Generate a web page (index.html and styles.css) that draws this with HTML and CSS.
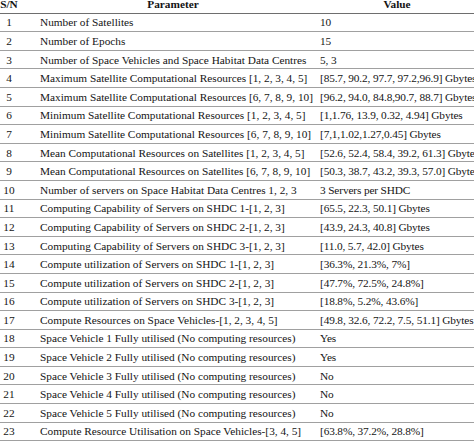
FILE: index.html
```html
<!DOCTYPE html>
<html>
<head>
<meta charset="utf-8">
<link rel="stylesheet" href="styles.css">
</head>
<body>
<table class="params">
  <colgroup>
    <col class="c-sn"><col class="c-param"><col class="c-val">
  </colgroup>
  <thead>
    <tr><th class="sn">S/N</th><th>Parameter</th><th>Value</th></tr>
  </thead>
  <tbody>
    <tr><td class="sn">1</td><td>Number of Satellites</td><td class="val">10</td></tr>
    <tr><td class="sn">2</td><td>Number of Epochs</td><td class="val">15</td></tr>
    <tr><td class="sn">3</td><td>Number of Space Vehicles and Space Habitat Data Centres</td><td class="val">5, 3</td></tr>
    <tr><td class="sn">4</td><td>Maximum Satellite Computational Resources [1, 2, 3, 4, 5]</td><td class="val">[85.7, 90.2, 97.7, 97.2,96.9] Gbytes</td></tr>
    <tr><td class="sn">5</td><td>Maximum Satellite Computational Resources [6, 7, 8, 9, 10]</td><td class="val">[96.2, 94.0, 84.8,90.7, 88.7] Gbytes</td></tr>
    <tr><td class="sn">6</td><td>Minimum Satellite Computational Resources [1, 2, 3, 4, 5]</td><td class="val">[1,1.76, 13.9, 0.32, 4.94] Gbytes</td></tr>
    <tr><td class="sn">7</td><td>Minimum Satellite Computational Resources [6, 7, 8, 9, 10]</td><td class="val">[7,1,1.02,1.27,0.45] Gbytes</td></tr>
    <tr><td class="sn">8</td><td>Mean Computational Resources on Satellites [1, 2, 3, 4, 5]</td><td class="val">[52.6, 52.4, 58.4, 39.2, 61.3] Gbytes</td></tr>
    <tr><td class="sn">9</td><td>Mean Computational Resources on Satellites [6, 7, 8, 9, 10]</td><td class="val">[50.3, 38.7, 43.2, 39.3, 57.0] Gbytes</td></tr>
    <tr><td class="sn">10</td><td>Number of servers on Space Habitat Data Centres 1, 2, 3</td><td class="val">3 Servers per SHDC</td></tr>
    <tr><td class="sn">11</td><td>Computing Capability of Servers on SHDC 1-[1, 2, 3]</td><td class="val">[65.5, 22.3, 50.1] Gbytes</td></tr>
    <tr><td class="sn">12</td><td>Computing Capability of Servers on SHDC 2-[1, 2, 3]</td><td class="val">[43.9, 24.3, 40.8] Gbytes</td></tr>
    <tr><td class="sn">13</td><td>Computing Capability of Servers on SHDC 3-[1, 2, 3]</td><td class="val">[11.0, 5.7, 42.0] Gbytes</td></tr>
    <tr><td class="sn">14</td><td>Compute utilization of Servers on SHDC 1-[1, 2, 3]</td><td class="val">[36.3%, 21.3%, 7%]</td></tr>
    <tr><td class="sn">15</td><td>Compute utilization of Servers on SHDC 2-[1, 2, 3]</td><td class="val">[47.7%, 72.5%, 24.8%]</td></tr>
    <tr><td class="sn">16</td><td>Compute utilization of Servers on SHDC 3-[1, 2, 3]</td><td class="val">[18.8%, 5.2%, 43.6%]</td></tr>
    <tr><td class="sn">17</td><td>Compute Resources on Space Vehicles-[1, 2, 3, 4, 5]</td><td class="val">[49.8, 32.6, 72.2, 7.5, 51.1] Gbytes</td></tr>
    <tr><td class="sn">18</td><td>Space Vehicle 1 Fully utilised (No computing resources)</td><td class="val">Yes</td></tr>
    <tr><td class="sn">19</td><td>Space Vehicle 2 Fully utilised (No computing resources)</td><td class="val">Yes</td></tr>
    <tr><td class="sn">20</td><td>Space Vehicle 3 Fully utilised (No computing resources)</td><td class="val">No</td></tr>
    <tr><td class="sn">21</td><td>Space Vehicle 4 Fully utilised (No computing resources)</td><td class="val">No</td></tr>
    <tr><td class="sn">22</td><td>Space Vehicle 5 Fully utilised (No computing resources)</td><td class="val">No</td></tr>
    <tr><td class="sn">23</td><td>Compute Resource Utilisation on Space Vehicles-[3, 4, 5]</td><td class="val">[63.8%, 37.2%, 28.8%]</td></tr>
  </tbody>
</table>
</body>
</html>
```
FILE: styles.css
```css
html, body {
  margin: 0;
  padding: 0;
  background: #ffffff;
}
body {
  overflow: hidden;
}
.params {
  margin-top: -5px;
  margin-left: -15px;
  border-collapse: separate;
  border-spacing: 0;
  table-layout: fixed;
  width: 496px;
  font-family: "Liberation Serif", "Times New Roman", serif;
  font-size: 11.3px;
  color: #141414;
}
.c-sn { width: 48px; }
.c-param { width: 280px; }
.c-val { width: 168px; }
.params th,
.params td {
  padding: 0 7px;
  height: 18.6px;
  box-sizing: border-box;
  white-space: nowrap;
  text-align: left;
  vertical-align: middle;
  line-height: 12px;
}
.params th {
  font-weight: bold;
  text-align: center;
  border-bottom: 1.5px solid #6e6e6e;
}
.params td {
  border-bottom: 1px solid #a0a0a0;
}
.params .sn {
  text-align: center;
}
.params .val {
  letter-spacing: -0.13px;
}
```
